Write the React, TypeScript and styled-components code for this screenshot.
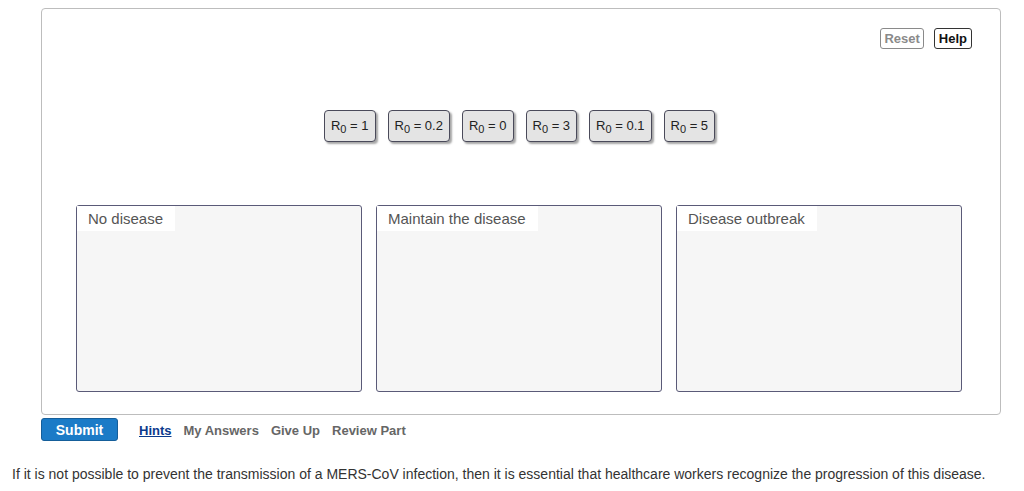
import React from "react";
import styled, { createGlobalStyle } from "styled-components";

const Global = createGlobalStyle`
  html, body { margin: 0; padding: 0; background: #fff; }
  body { font-family: "Liberation Sans", Arial, sans-serif; color: #333; }
`;

const Page = styled.div`
  padding: 8px 0 0 41px;
  width: 960px;
`;

const Panel = styled.div`
  box-sizing: border-box;
  width: 960px;
  height: 407px;
  border: 1px solid #bdbdbd;
  border-radius: 4px;
  padding: 19px 28px 0 34px;
  display: flex;
  flex-direction: column;
`;

const TopBar = styled.div`
  display: flex;
  justify-content: flex-end;
  gap: 10px;
`;

const SmallButton = styled.button<{ $muted?: boolean }>`
  box-sizing: border-box;
  height: 21px;
  padding: 0 ${(p) => (p.$muted ? 3 : 4)}px;
  border: 1px solid ${(p) => (p.$muted ? "#8a8a8a" : "#333")};
  border-radius: 3px;
  background: #fff;
  font-family: "Liberation Sans", Arial, sans-serif;
  font-weight: bold;
  font-size: 13px;
  color: ${(p) => (p.$muted ? "#8a8a8a" : "#111")};
  cursor: pointer;
`;

const ChipRow = styled.div`
  display: flex;
  justify-content: center;
  gap: 12px;
  margin-top: 61px;
  margin-right: 9px;
`;

const Chip = styled.div`
  box-sizing: border-box;
  height: 32px;
  padding: 0 6px;
  display: flex;
  align-items: center;
  border: 1px solid #4a4a5a;
  border-radius: 4px;
  background: #e4e4e4;
  box-shadow: 2px 2px 2px rgba(0, 0, 0, 0.35);
  font-size: 13px;
  color: #222;
`;

const ChipText = styled.span`
  white-space: pre;
  line-height: 16px;
`;

const Sub = styled.span`
  font-size: 11px;
  position: relative;
  top: 3px;
`;

const Zones = styled.div`
  display: flex;
  gap: 14px;
  margin-top: 63px;
`;

const Zone = styled.div`
  box-sizing: border-box;
  width: 286px;
  height: 187px;
  border: 1px solid #5a5a78;
  border-radius: 3px;
  background: #f6f6f6;
  display: flex;
  align-items: flex-start;
`;

const ZoneLabel = styled.div`
  background: #fff;
  padding: 5px 12px 4px 11px;
  font-size: 15px;
  color: #555;
  line-height: 16px;
`;

const Actions = styled.div`
  display: flex;
  align-items: center;
  margin-top: 3px;
`;

const Submit = styled.button`
  box-sizing: border-box;
  width: 77px;
  height: 23px;
  border: 1px solid #155e9a;
  border-radius: 3px;
  background: #1b7bc7;
  color: #fff;
  font-family: "Liberation Sans", Arial, sans-serif;
  font-weight: bold;
  font-size: 14px;
  margin-right: 21px;
  cursor: pointer;
`;

const Link = styled.span<{ $active?: boolean }>`
  font-size: 13px;
  font-weight: bold;
  color: ${(p) => (p.$active ? "#0b3a8c" : "#666")};
  text-decoration: ${(p) => (p.$active ? "underline" : "none")};
  margin-right: 12px;
  margin-top: 2px;
`;

const Statement = styled.p`
  margin: 25px 0 0 12px;
  font-size: 14px;
  color: #333;
`;

const chips = ["1", "0.2", "0", "3", "0.1", "5"];
const zones = ["No disease", "Maintain the disease", "Disease outbreak"];

export default function App() {
  return (
    <>
      <Global />
      <Page>
        <Panel>
          <TopBar>
            <SmallButton $muted>Reset</SmallButton>
            <SmallButton>Help</SmallButton>
          </TopBar>
          <ChipRow>
            {chips.map((c) => (
              <Chip key={c}>
                <ChipText>
                  R<Sub>0</Sub> = {c}
                </ChipText>
              </Chip>
            ))}
          </ChipRow>
          <Zones>
            {zones.map((z) => (
              <Zone key={z}>
                <ZoneLabel>{z}</ZoneLabel>
              </Zone>
            ))}
          </Zones>
        </Panel>
        <Actions>
          <Submit>Submit</Submit>
          <Link $active>Hints</Link>
          <Link>My Answers</Link>
          <Link>Give Up</Link>
          <Link>Review Part</Link>
        </Actions>
      </Page>
      <Statement>
        If it is not possible to prevent the transmission of a MERS-CoV infection, then it is essential that healthcare workers recognize the progression of this disease.
      </Statement>
    </>
  );
}
